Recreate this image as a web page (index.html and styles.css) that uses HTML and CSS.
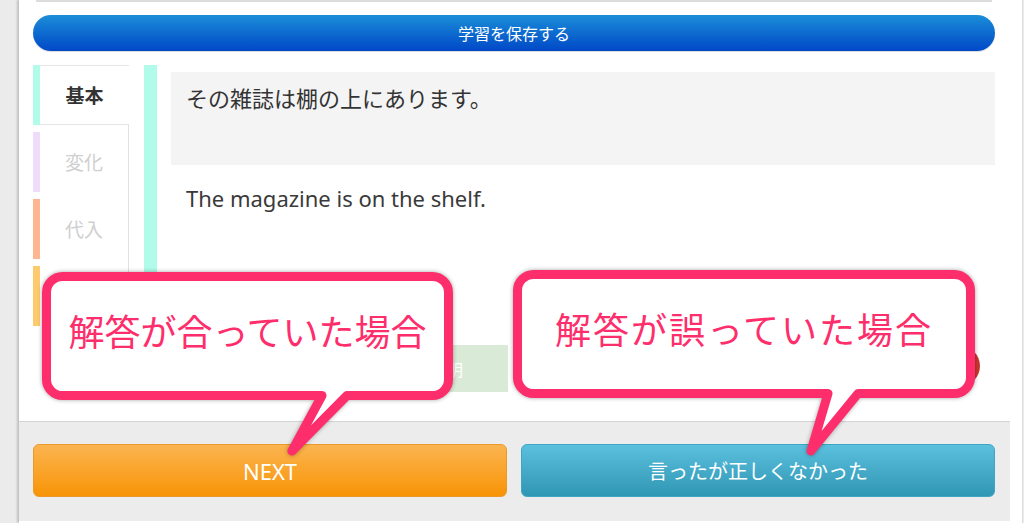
FILE: index.html
```html
<!DOCTYPE html>
<html lang="ja">
<head>
<meta charset="utf-8">
<title>学習</title>
<link rel="stylesheet" href="styles.css">
</head>
<body>
<div class="page">
  <div class="main">
    <div class="top-rule"></div>
    <div class="save-btn">学習を保存する</div>
    <div class="study">
      <div class="tabs">
        <div class="tab tab-active"><span class="bar bar-mint"></span><span class="label">基本</span></div>
        <div class="tab"><span class="bar bar-lavender"></span><span class="label">変化</span></div>
        <div class="tab"><span class="bar bar-salmon"></span><span class="label">代入</span></div>
        <div class="tab"><span class="bar bar-yellow"></span><span class="label"></span></div>
      </div>
      <div class="mint-strip"></div>
      <div class="content">
        <div class="question">その雑誌は棚の上にあります。</div>
        <div class="answer">The magazine is on the shelf.</div>
        <div class="tools">
          <div class="explain-btn">説明</div>
          <div class="rec-btn"></div>
        </div>
      </div>
    </div>
  </div>
  <div class="footer">
    <div class="btn btn-next">NEXT</div>
    <div class="btn btn-wrong">言ったが正しくなかった</div>
  </div>

  <div class="bubble bubble-ok">
    <svg class="bubble-shape" width="415" height="195" viewBox="0 0 415 195">
      <path d="M20.5 8.5 H390.5 A16 16 0 0 1 406.5 24.5 V111.5 A16 16 0 0 1 390.5 127.5 H305 L250 183 L280 127.5 H20.5 A16 16 0 0 1 4.5 111.5 V24.5 A16 16 0 0 1 20.5 8.5 Z"/>
    </svg>
    <div class="bubble-text">解答が合っていた場合</div>
  </div>
  <div class="bubble bubble-ng">
    <svg class="bubble-shape" width="470" height="195" viewBox="0 0 470 195">
      <path d="M20.5 8.5 H441.5 A16 16 0 0 1 457.5 24.5 V111.5 A16 16 0 0 1 441.5 127.5 H345 L298 185 L315 127.5 H20.5 A16 16 0 0 1 4.5 111.5 V24.5 A16 16 0 0 1 20.5 8.5 Z"/>
    </svg>
    <div class="bubble-text">解答が誤っていた場合</div>
  </div>
</div>
</body>
</html>
```

FILE: styles.css
```css
* { box-sizing: border-box; }
html, body { margin: 0; padding: 0; }
body {
  background: #ebebeb;
  font-family: "Noto Sans", "Noto Sans CJK JP", sans-serif;
  color: #333;
  overflow: hidden;
}
.page {
  position: relative;
  margin-left: 19px;
  width: 1004px;
  height: 523px;
  background: #fff;
  border-right: 1px solid #dedede;
  box-shadow: -2px 0 2px rgba(0,0,0,0.18);
}
.main {
  height: 421px;
  padding: 0 27px 0 14px;
}
.top-rule {
  height: 2px;
  margin: 0 3px;
  background: #dcdcdc;
}
.save-btn {
  margin-top: 13px;
  height: 36px;
  border-radius: 18px;
  background: linear-gradient(#1b8ed8, #0048c7);
  color: #fff;
  font-size: 16px;
  display: flex;
  align-items: center;
  justify-content: center;
  box-shadow: 0 1px 1px rgba(0,0,0,0.15);
}
.study {
  margin-top: 14px;
  display: flex;
  align-items: flex-start;
}
.tabs {
  width: 96px;
  display: flex;
  flex-direction: column;
}
.tab {
  height: 67px;
  display: flex;
  border-right: 1px solid #e2e2e2;
}
.tab .bar {
  width: 7px;
  margin-top: 7px;
}
.tab .label {
  flex: 1;
  display: flex;
  align-items: center;
  justify-content: center;
  font-size: 19px;
  color: #cfcfcf;
  padding-top: 7px;
}
.tab-active {
  height: 60px;
  border-right: none;
}
.tab-active .bar { margin-top: 0; }
.tab-active .label {
  padding-top: 0;
  color: #333;
  font-weight: bold;
  border-top: 1px solid #e6e6e6;
  border-bottom: 1px solid #e6e6e6;
}
.bar-mint { background: #b0fbe9; }
.bar-lavender { background: #efdcfa; }
.bar-salmon { background: #fdb592; }
.bar-yellow { background: #fdca6e; }
.mint-strip {
  width: 13px;
  height: 210px;
  margin-left: 15px;
  background: #b0fbe9;
}
.content {
  flex: 1;
  margin-left: 14px;
  padding-top: 7px;
}
.question {
  height: 93px;
  background: #f4f4f4;
  padding: 11px 15px 0;
  font-size: 22px;
  line-height: 30px;
  color: #333;
}
.answer {
  margin-top: 18px;
  padding: 0 15px;
  font-size: 22px;
  line-height: 30px;
  color: #3a3a3a;
}
.tools {
  margin-top: 132px;
  display: flex;
  justify-content: space-between;
  align-items: flex-start;
  padding: 0 15px 0 215px;
}
.explain-btn {
  width: 122px;
  height: 47px;
  background: #d9ead7;
  color: #fff;
  font-size: 16px;
  display: flex;
  align-items: center;
  justify-content: center;
}
.rec-btn {
  width: 40px;
  height: 40px;
  margin-top: 1px;
  border-radius: 50%;
  background: #c9372f;
}
.footer {
  height: 100px;
  margin-right: 12px;
  background: #ececec;
  border-top: 1px solid #d4d4d4;
  padding: 22px 15px 0 14px;
  display: flex;
  gap: 14px;
}
.btn {
  flex: 1;
  height: 53px;
  border-radius: 6px;
  color: #fff;
  font-size: 20px;
  display: flex;
  align-items: center;
  justify-content: center;
}
.btn-next {
  background: linear-gradient(#fbb450, #f89406);
  border: 1px solid #eb9a2a;
  font-size: 22px;
}
.btn-wrong {
  background: linear-gradient(#5bc0de, #2f96b4);
  border: 1px solid #3ea6c4;
}
.bubble {
  position: absolute;
  height: 195px;
}
.bubble-ok { left: 23px; top: 268px; width: 415px; }
.bubble-ng { left: 494px; top: 266px; width: 470px; }
.bubble-shape {
  position: absolute;
  left: 0;
  top: 0;
  overflow: visible;
  filter: drop-shadow(0 0 2px rgba(0,0,0,0.35));
}
.bubble-shape path {
  fill: #fff;
  stroke: #fe2d6b;
  stroke-width: 9;
  stroke-linejoin: round;
}
.bubble-text {
  position: absolute;
  left: 4px;
  top: 30px;
  height: 64px;
  display: flex;
  align-items: center;
  justify-content: center;
  font-family: "Noto Sans CJK JP", sans-serif;
  font-size: 36px;
  color: #fe2d6b;
}
.bubble-ok .bubble-text { width: 403px; }
.bubble-ng .bubble-text { width: 454px; letter-spacing: 2px; }
```
